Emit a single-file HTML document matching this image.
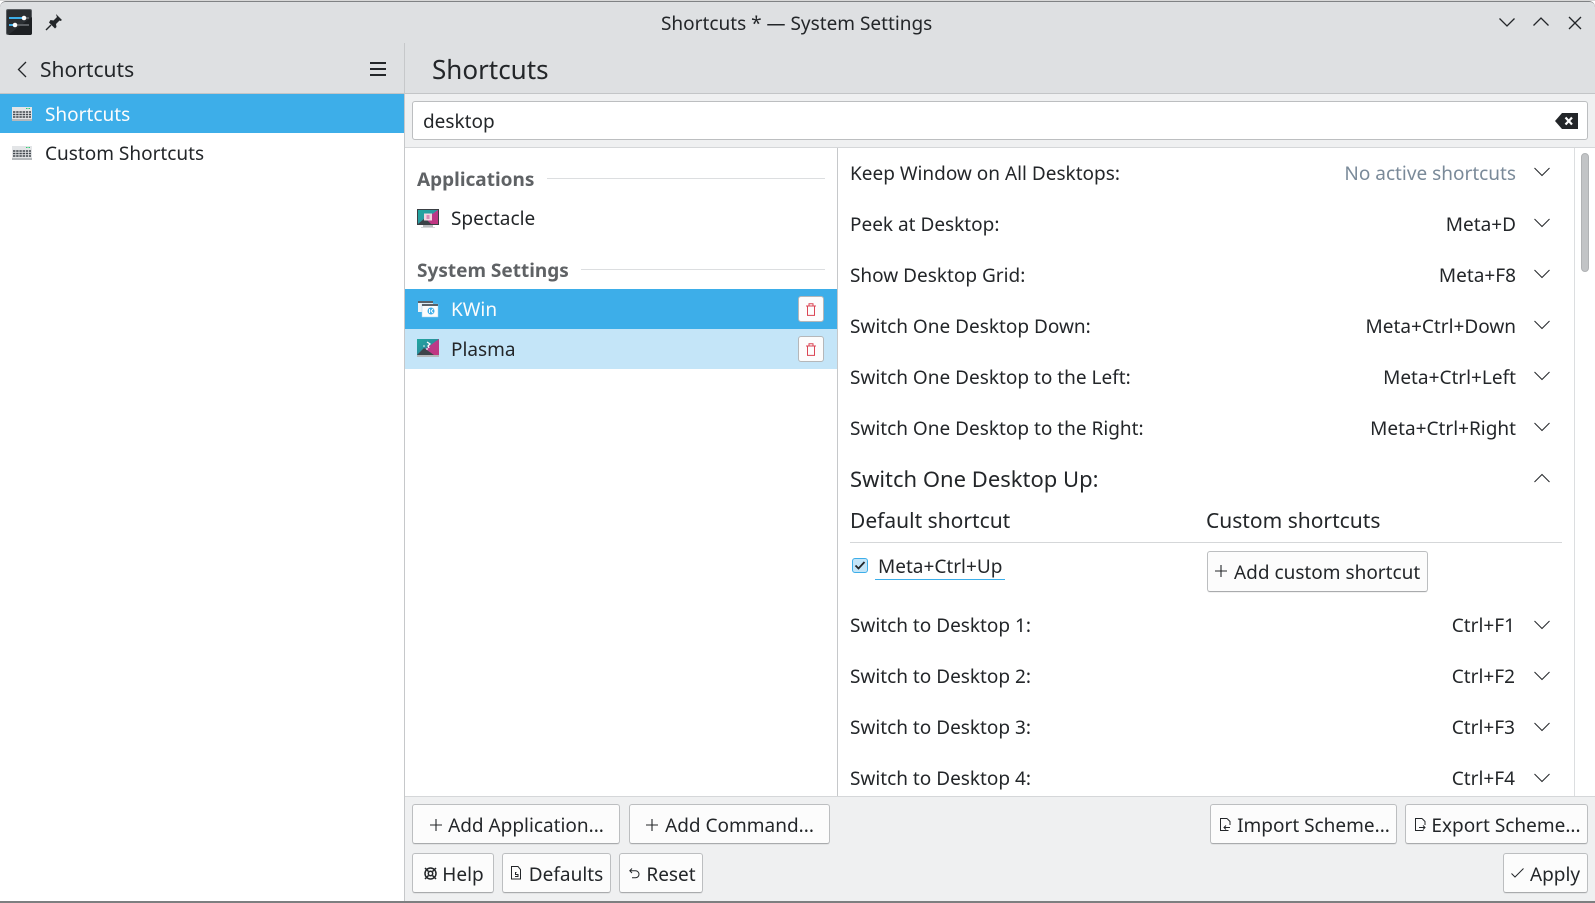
<!DOCTYPE html>
<html><head><meta charset="utf-8"><title>Shortcuts * — System Settings</title>
<style>
html,body{margin:0;padding:0;background:#fff}
#w{position:relative;width:1595px;height:903px;overflow:hidden;background:#fff;font-family:"Noto Sans","Noto Sans CJK SC","Liberation Sans",sans-serif;color:#232629;font-size:19px}
.a{position:absolute}
.t{position:absolute;line-height:30px;height:30px;white-space:nowrap}
.r{position:absolute;line-height:30px;height:30px;white-space:nowrap;right:79px;text-align:right}
.b{position:absolute;box-sizing:border-box;height:40px;background:#fcfcfc;border:1px solid #bcbec0;border-bottom-color:#a9abad;border-radius:3px;line-height:41px;white-space:nowrap;text-align:center;font-size:19px;box-shadow:0 1px 0 rgba(0,0,0,.05)}
.h{position:absolute;line-height:30px;height:30px;white-space:nowrap;font-weight:bold;color:#5f6265}
.d{position:absolute;box-sizing:border-box;width:26px;height:26px;left:798px;background:#fcfcfc;border:1px solid #b5b7b9;border-radius:3px}
svg{position:absolute;display:block;overflow:visible}
</style></head><body><div id="w">
<div class="a" style="left:0;top:0;width:1595px;height:1px;background:#d8d8d8"></div>
<div class="a" style="left:0;top:1px;width:1595px;height:8px;background:#808284;border-radius:6px 6px 0 0"></div>
<div class="a" style="left:0;top:901px;width:1595px;height:2px;background:#7d7f80"></div>
<div class="a" style="left:0;top:40px;width:1595px;height:861px;background:#eff0f1"></div>
<div class="a" style="left:0;top:2px;width:1595px;height:91px;background:#dee0e2;border-radius:5px 5px 0 0"></div>
<div class="a" style="left:0;top:93px;width:1595px;height:1px;background:#c3c5c7"></div>
<div class="a" style="left:404px;top:43px;width:1px;height:858px;background:#c6c8ca"></div>

<!-- titlebar -->
<svg style="left:6px;top:9px" width="26" height="26" viewBox="0 0 26 26"><rect x=".5" y=".5" width="25" height="25" rx="1.500" fill="#2a2e32" stroke="#5a5e62"/><path d="M2 26L26 8V24a2 2 0 0 1-2 2z" fill="#1d2023"/><rect x="3" y="8" width="16" height="2" fill="#3daee9"/><rect x="19" y="8" width="4" height="2" fill="#5a5e62"/><circle cx="18" cy="9" r="2.300" fill="#fcfcfc"/><rect x="3" y="15" width="7" height="2" fill="#3daee9"/><rect x="10" y="15" width="13" height="2" fill="#5a5e62"/><circle cx="9" cy="16" r="2.300" fill="#fcfcfc"/></svg>
<svg style="left:45px;top:13px" width="18" height="18" viewBox="0 0 18 18"><path d="M11 1l6 6-1.500 1-1-.5-3.500 3.500.5 3-1.500 1.500-6-6L5.500 7l3 .5L12 4l-.5-1z" fill="#232629"/><path d="M1 17l5-5" stroke="#232629" stroke-width="1.400" fill="none"/></svg>
<div class="t" id="title" style="left:661px;top:8px">Shortcuts * — System Settings</div>
<svg style="left:1499px;top:17px" width="16" height="10" fill="none" stroke="#232629" stroke-width="1.300"><path d="M.5 1.500L8 9l7.500-7.500"/></svg>
<svg style="left:1533px;top:17px" width="16" height="10" fill="none" stroke="#232629" stroke-width="1.300"><path d="M.5 8.500L8 1l7.500 7.500"/></svg>
<svg style="left:1568px;top:16px" width="14" height="14" fill="none" stroke="#232629" stroke-width="1.300"><path d="M1 1l12 12M13 1L1 13"/></svg>

<!-- header -->
<svg style="left:17px;top:61px" width="10" height="17" fill="none" stroke="#232629" stroke-width="1.300"><path d="M9 1L1.500 8.500 9 16"/></svg>
<div class="t" style="left:40px;top:55px;font-size:21px">Shortcuts</div>
<div class="a" style="left:370px;top:62px;width:16px;height:2px;background:#232629"></div>
<div class="a" style="left:370px;top:68px;width:16px;height:2px;background:#232629"></div>
<div class="a" style="left:370px;top:74px;width:16px;height:2px;background:#232629"></div>
<div class="t" style="left:432px;top:54px;font-size:26px">Shortcuts</div>

<!-- sidebar -->
<div class="a" style="left:0;top:94px;width:404px;height:807px;background:#fff"></div>
<div class="a" style="left:0;top:94px;width:404px;height:39px;background:#3daee9"></div>
<svg style="left:12px;top:107px" width="20" height="14" viewBox="0 0 20 14"><rect width="20" height="14" fill="#e3e5e7"/><rect y="12" width="20" height="2" fill="#b4b8bb"/><path d="M14 1.500h1.500M16.500 1.500H18" stroke="#2ecc71" stroke-width="1"/><path d="M1 5h18M1 7.500h18M1 10h18" stroke="#41474d" stroke-width="1.400" stroke-dasharray="2.400 .8"/></svg>
<div class="t" style="left:45px;top:99px;color:#fcfcfc">Shortcuts</div>
<svg style="left:12px;top:146px" width="20" height="14" viewBox="0 0 20 14"><rect width="20" height="14" fill="#e3e5e7"/><rect y="12" width="20" height="2" fill="#b4b8bb"/><path d="M14 1.500h1.500M16.500 1.500H18" stroke="#2ecc71" stroke-width="1"/><path d="M1 5h18M1 7.500h18M1 10h18" stroke="#41474d" stroke-width="1.400" stroke-dasharray="2.400 .8"/></svg>
<div class="t" style="left:45px;top:138px">Custom Shortcuts</div>

<!-- search -->
<div class="a" style="left:412px;top:101px;width:1176px;height:39px;box-sizing:border-box;background:#fff;border:1px solid #bcbec0;border-radius:3px"></div>
<div class="t" style="left:423px;top:106px">desktop</div>
<svg style="left:1555px;top:113px" width="23" height="16" viewBox="0 0 23 16"><path d="M7 0h16v16H7L0 8z" fill="#232629"/><path d="M10.500 4.500l6.500 7M17 4.500l-6.500 7" stroke="#fcfcfc" stroke-width="2.200"/></svg>
<div class="a" style="left:405px;top:147px;width:1190px;height:1px;background:#d5d7d9"></div>

<!-- left list -->
<div class="a" style="left:405px;top:148px;width:432px;height:648px;background:#fff"></div>
<div class="a" style="left:837px;top:148px;width:1px;height:648px;background:#c6c8ca"></div>
<div class="h" id="ha" style="left:417px;top:164px">Applications</div>
<div class="a" style="left:547px;top:178px;width:278px;height:1px;background:#dcdee0"></div>
<svg style="left:417px;top:209px" width="22" height="20" viewBox="0 0 22 20"><defs><linearGradient id="g" x1="0" y1="0" x2="1" y2="1"><stop offset="0" stop-color="#1fa8a0"/><stop offset=".5" stop-color="#2c9aa0"/><stop offset=".5" stop-color="#b93a8a"/><stop offset="1" stop-color="#c2357f"/></linearGradient></defs><rect width="22" height="16" fill="#3b3f44"/><rect x="1" y="1" width="20" height="14" fill="url(#g)"/><path d="M1 15l7-6 6 6z" fill="#3a4248"/><rect x="7" y="4.500" width="8" height="7" fill="#f3d6e0"/><rect x="9.500" y="6" width="3" height="4" fill="#d88ab5"/><rect x="6" y="16" width="10" height="2" fill="#b9bcbf"/><rect x="4" y="18" width="14" height="1" fill="#d5d7d9"/></svg>
<div class="t" id="spec" style="left:451px;top:203px">Spectacle</div>
<div class="h" id="hs" style="left:417px;top:255px">System Settings</div>
<div class="a" style="left:581px;top:269px;width:244px;height:1px;background:#dcdee0"></div>
<div class="a" style="left:405px;top:289px;width:432px;height:40px;background:#3daee9"></div>
<div class="a" style="left:405px;top:329px;width:432px;height:40px;background:#c4e5f8"></div>
<svg style="left:418px;top:301px" width="20" height="16" viewBox="0 0 20 16"><rect x="0" y="0" width="15" height="11" fill="#eef2f5"/><rect x="0" y="0" width="15" height="2" fill="#5a6168"/><rect x="4" y="3" width="16" height="13" fill="#fcfcfc" stroke="#9fd4f2" stroke-width=".5"/><rect x="4" y="3" width="16" height="2" fill="#5a6168"/><circle cx="13" cy="10" r="3.500" fill="#3daee9"/><path d="M11.500 8v4M15 8l-2 2 2 2" stroke="#fcfcfc" stroke-width="1" fill="none"/></svg>
<div class="t" style="left:451px;top:294px;color:#fcfcfc">KWin</div>
<svg style="left:417px;top:339px" width="22" height="20" viewBox="0 0 22 20"><defs><linearGradient id="g2" x1="0" y1="0" x2="1" y2="1"><stop offset="0" stop-color="#1fa8a0"/><stop offset=".5" stop-color="#2b8f9c"/><stop offset=".5" stop-color="#b93a8a"/><stop offset="1" stop-color="#c2357f"/></linearGradient></defs><rect width="22" height="16" fill="url(#g2)"/><path d="M0 16l7-7 10 7z" fill="#3d444a"/><path d="M10 3l3 2-2 2 1 2" stroke="#fcfcfc" stroke-width="1.300" fill="none"/><circle cx="7" cy="7" r=".8" fill="#fcfcfc"/><circle cx="10" cy="10" r=".9" fill="#fcfcfc"/><rect y="16" width="22" height="2" fill="#b3b6b9"/></svg>
<div class="t" style="left:451px;top:334px">Plasma</div>
<div class="d" style="top:296px"><svg style="left:7px;top:6px" width="10" height="13" fill="none" stroke="#da4453" stroke-width="1"><path d="M0 3h10M3 3V.7h4V3M1.500 3v9.400h7V3"/></svg></div>
<div class="d" style="top:336px"><svg style="left:7px;top:6px" width="10" height="13" fill="none" stroke="#da4453" stroke-width="1"><path d="M0 3h10M3 3V.7h4V3M1.500 3v9.400h7V3"/></svg></div>

<!-- right panel -->
<div class="a" style="left:838px;top:148px;width:736px;height:648px;background:#fff"></div>
<div class="a" style="left:1574px;top:148px;width:1px;height:648px;background:#dcdee0"></div>
<div class="a" style="left:1575px;top:148px;width:20px;height:648px;background:#fff"></div>
<div class="a" style="left:1581px;top:153px;width:8px;height:119px;box-sizing:border-box;background:#c2c4c6;border:1px solid #b0b2b4;border-radius:4px"></div>

<div class="t" style="left:850px;top:158px">Keep Window on All Desktops:</div>
<div class="r" style="top:158px;color:#7a8a99">No active shortcuts</div>
<div class="t" style="left:850px;top:209px">Peek at Desktop:</div><div class="r" style="top:209px">Meta+D</div>
<div class="t" style="left:850px;top:260px">Show Desktop Grid:</div><div class="r" style="top:260px">Meta+F8</div>
<div class="t" style="left:850px;top:311px">Switch One Desktop Down:</div><div class="r" style="top:311px">Meta+Ctrl+Down</div>
<div class="t" style="left:850px;top:362px">Switch One Desktop to the Left:</div><div class="r" style="top:362px">Meta+Ctrl+Left</div>
<div class="t" style="left:850px;top:413px">Switch One Desktop to the Right:</div><div class="r" style="top:413px">Meta+Ctrl+Right</div>
<div class="t" style="left:850px;top:464px;font-size:22px">Switch One Desktop Up:</div>
<div class="t" style="left:850px;top:506px;font-size:21px">Default shortcut</div>
<div class="t" style="left:1206px;top:506px;font-size:21px">Custom shortcuts</div>
<div class="a" style="left:850px;top:542px;width:712px;height:1px;background:#d5d7d9"></div>
<div class="a" style="left:852px;top:558px;width:16px;height:15px;box-sizing:border-box;background:#c4e5f8;border:1px solid #3daee9;border-radius:3px"></div>
<svg style="left:855px;top:561px" width="10" height="9" fill="none" stroke="#232629" stroke-width="1.800"><path d="M.5 4.500L3.500 7.500 9.500 1"/></svg>
<div class="t" style="left:878px;top:551px">Meta+Ctrl+Up</div>
<div class="a" style="left:875px;top:579px;width:130px;height:1px;background:#3daee9"></div>
<div class="b" id="acs" style="left:1207px;top:551px;width:221px;height:41px;line-height:40px;text-align:left;padding-left:26px">Add custom shortcut</div>
<svg style="left:1215px;top:565px" width="12" height="12" stroke="#232629" stroke-width="1.100"><path d="M6 0v12M0 6h12"/></svg>
<div class="t" style="left:850px;top:610px">Switch to Desktop 1:</div><div class="r" style="top:610px;right:80px">Ctrl+F1</div>
<div class="t" style="left:850px;top:661px">Switch to Desktop 2:</div><div class="r" style="top:661px;right:80px">Ctrl+F2</div>
<div class="t" style="left:850px;top:712px">Switch to Desktop 3:</div><div class="r" style="top:712px;right:80px">Ctrl+F3</div>
<div class="t" style="left:850px;top:763px">Switch to Desktop 4:</div><div class="r" style="top:763px;right:80px">Ctrl+F4</div>
<svg style="left:1534px;top:0" width="16" height="800" fill="none" stroke="#232629" stroke-width="1"><path d="M.5 168L8 175.500 15.500 168M.5 219L8 226.500 15.500 219M.5 270L8 277.500 15.500 270M.5 321L8 328.500 15.500 321M.5 372L8 379.500 15.500 372M.5 423L8 430.500 15.500 423M.5 482L8 474.500 15.500 482M.5 621L8 628.500 15.500 621M.5 672L8 679.500 15.500 672M.5 723L8 730.500 15.500 723M.5 774L8 781.500 15.500 774"/></svg>

<!-- bottom -->
<div class="a" style="left:405px;top:796px;width:1190px;height:1px;background:#d5d7d9"></div>
<div class="b" style="left:412px;top:804px;width:208px;padding-left:20px">Add Application...</div>
<svg style="left:430px;top:819px" width="12" height="12" stroke="#232629" stroke-width="1.100"><path d="M6 0v12M0 6h12"/></svg>
<div class="b" style="left:629px;top:804px;width:201px;padding-left:20px">Add Command...</div>
<svg style="left:646px;top:819px" width="12" height="12" stroke="#232629" stroke-width="1.100"><path d="M6 0v12M0 6h12"/></svg>
<div class="b" style="left:1210px;top:804px;width:187px;padding-left:20px">Import Scheme...</div>
<svg style="left:1220px;top:818px" width="11" height="13" fill="none" stroke="#232629" stroke-width="1"><path d="M7 .5H.5v12h8M7 .5L10 3.500V7M4 9.500h6M6 7.500L4 9.500l2 2"/></svg>
<div class="b" style="left:1405px;top:804px;width:183px;padding-left:19px">Export Scheme...</div>
<svg style="left:1415px;top:818px" width="11" height="13" fill="none" stroke="#232629" stroke-width="1"><path d="M7 .5H.5v12h8M7 .5L10 3.500V7M4 9.500h6M8 7.500l2 2-2 2"/></svg>
<div class="b" style="left:412px;top:853px;width:82px;padding-left:20px">Help</div>
<svg style="left:424px;top:867px" width="13" height="13" fill="none" stroke="#232629" stroke-width="1.500"><circle cx="6.500" cy="6.500" r="5.500"/><circle cx="6.500" cy="6.500" r="2.200"/><path d="M1 1l3.500 3.500M12 1L8.500 4.500M1 12l3.500-3.500M12 12L8.500 8.500"/></svg>
<div class="b" style="left:502px;top:853px;width:109px;padding-left:19px">Defaults</div>
<svg style="left:511px;top:866px" width="11" height="14" fill="none" stroke="#232629" stroke-width="1"><path d="M7 .5H.5v12.500h9V3.500zM5.500 6.500h-1v2h2.500v2H4"/></svg>
<div class="b" style="left:619px;top:853px;width:84px;padding-left:20px">Reset</div>
<svg style="left:629px;top:868px" width="11" height="11" fill="none" stroke="#232629" stroke-width="1"><path d="M3 .5L.8 2.800 3 5M1 2.800h5.500a3.500 3.500 0 0 1 0 7H3"/></svg>
<div class="b" style="left:1503px;top:853px;width:85px;padding-left:19px">Apply</div>
<svg style="left:1511px;top:868px" width="13" height="10" fill="none" stroke="#232629" stroke-width="1"><path d="M.5 5.500L4 9l8.500-8.500"/></svg>
</div></body></html>
